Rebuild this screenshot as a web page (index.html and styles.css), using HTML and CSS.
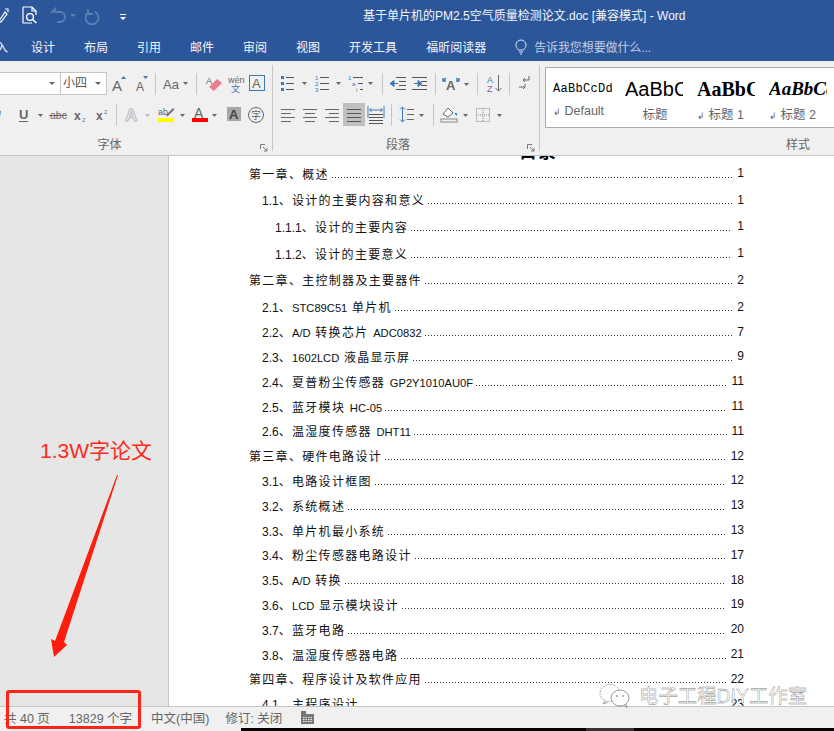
FILE: index.html
```html
<!DOCTYPE html>
<html lang="zh-CN">

<head>
    <meta charset="UTF-8">
    <title>基于单片机的PM2.5空气质量检测论文.doc</title>
    <link rel="stylesheet" href="styles.css">
</head>

<body>
    <div class="window">
        <!-- 标题栏 -->
        <div class="titlebar">
            <svg width="22" height="32"><path d="M-1 21l6-9 2 2-6 8zM5 9h3v3" fill="none" stroke="#fff" stroke-width="1.2"/></svg>
            <svg width="28" height="32"><path d="M1 7h9l4 4v4M1 7v16h9M10 7v4h4" fill="none" stroke="#fff" stroke-width="1.2"/><circle cx="8" cy="17" r="3.4" fill="none" stroke="#fff" stroke-width="1.4"/><path d="M10.5 19.5l4 3.5" stroke="#fff" stroke-width="1.6"/></svg>
            <svg width="35" height="32"><path d="M1 13l4-4v3h5a4.500 4.500 0 0 1 0 10H7" fill="none" stroke="#5d7fb1" stroke-width="1.8"/><path d="M20 14h6l-3 3z" fill="#5d7fb1"/></svg>
            <svg width="35" height="32"><path d="M10 11a6.500 6.500 0 1 1-6 0M3 8v5h5" fill="none" stroke="#5d7fb1" stroke-width="1.8" transform="translate(0 1)"/></svg>
            <svg width="10" height="32"><path d="M0 14h6v1H0zM0 17h6l-3 3z" fill="#fff"/></svg>
            <div class="doc-title">基于单片机的PM2.5空气质量检测论文.doc [兼容模式] - Word</div>
        </div>
        <div class="tabs">
            <span class="tab tab-first">插入</span>
            <span class="tab">设计</span>
            <span class="tab">布局</span>
            <span class="tab">引用</span>
            <span class="tab">邮件</span>
            <span class="tab">审阅</span>
            <span class="tab">视图</span>
            <span class="tab">开发工具</span>
            <span class="tab">福昕阅读器</span>
            <svg class="bulb" width="12" height="16"><path d="M3.500 11C2 9 1 8 1 6a5 5 0 0 1 10 0c0 2-1 3-2.500 5zM4 13h4M5 15h2" fill="none" stroke="#dfe6f1" stroke-width="1"/></svg>
            <span class="tell">告诉我您想要做什么...</span>
        </div>

        <!-- 功能区 -->
        <div class="ribbon">
            <div class="group group-font">
                <div class="tool-row">
                    <div class="select select-name"><i class="caret"></i></div>
                    <div class="select select-size"><span class="size-text">小四</span><i class="caret"></i></div>
                    <svg width="23" height="23"><text x="5" y="19" class="ico" font-size="15">A</text><path d="M14 7l2.500-3 2.500 3z" fill="#3f78b5"/></svg>
                    <svg width="23" height="23"><text x="6" y="19" class="ico" font-size="12">A</text><path d="M13 4h5l-2.500 3z" fill="#3f78b5"/></svg>
                    <i class="sep"></i>
                    <svg width="36" height="23"><text x="5" y="17" class="ico" font-size="13">Aa</text><path d="M25 10h5l-2.500 3z" fill="#666"/></svg>
                    <i class="sep"></i>
                    <svg width="25" height="23"><text x="7" y="12" class="ico" font-size="9">A</text><path d="M10 15l8-8 5 4-8 8z" fill="#e8808c"/></svg>
                    <svg width="23" height="23"><text x="4" y="11" class="ico" font-size="9">wén</text><text x="7" y="20" class="ico-blue" font-size="9">文</text></svg>
                    <svg width="21" height="23"><rect x="2.500" y="3.500" width="15" height="15" fill="none" stroke="#3f78b5"/><text x="5" y="16" class="ico" font-size="13">A</text></svg>
                </div>
                <div class="tool-row">
                    <svg width="14" height="23"><text x="-3" y="17" class="ico" font-size="13" font-weight="bold" font-style="italic">I</text></svg>
                    <svg width="32" height="23"><text x="5" y="16" class="ico" font-size="13" font-weight="bold">U</text><path d="M5 18.500h9" stroke="#666"/><path d="M24 11h5l-2.500 3z" fill="#666"/></svg>
                    <svg width="24" height="23"><text x="4" y="16" class="ico" font-size="10.500">abc</text><path d="M3 12.500h18" stroke="#666"/></svg>
                    <svg width="22" height="23"><text x="4" y="17" class="ico" font-size="12" font-weight="bold">x</text><text x="12" y="19" class="ico-blue" font-size="6">2</text></svg>
                    <svg width="22" height="23"><text x="4" y="17" class="ico" font-size="12" font-weight="bold">x</text><text x="12" y="11" class="ico-blue" font-size="6">2</text></svg>
                    <i class="sep"></i>
                    <svg width="36" height="23"><text x="6" y="18" font-size="17" font-family="Liberation Sans" fill="#f0f0f0" stroke="#bdbdbd" stroke-width="1" font-weight="bold">A</text><path d="M26 11h5l-2.500 3z" fill="#bbb"/></svg>
                    <svg width="35" height="23"><text x="3" y="12" class="ico" font-size="9">ab</text><path d="M11 12l7-7 1.500 1.500-7 7z" fill="#777"/><rect x="3" y="15" width="16" height="4" fill="#ff0"/><path d="M25 11h5l-2.500 3z" fill="#666"/></svg>
                    <svg width="32" height="23"><text x="4" y="15" class="ico" font-size="14">A</text><rect x="2" y="15" width="16" height="4" fill="#f00"/><path d="M22 11h5l-2.500 3z" fill="#666"/></svg>
                    <svg width="23" height="23"><rect x="5" y="4" width="14" height="14" fill="#a6a6a6"/><text x="7" y="16" class="ico-dark" font-size="13" font-weight="bold">A</text></svg>
                    <svg width="22" height="23"><circle cx="11" cy="12" r="7.500" fill="none" stroke="#666"/><text x="6" y="16" class="ico" font-size="10">字</text></svg>
                </div>
                <div class="group-label">字体</div>
                <svg class="launcher" width="8" height="8"><path d="M.5 5V.5H5M3 3l4 4M4 7h3V4" fill="none" stroke="#777"/></svg>
            </div>

            <div class="group group-para">
                <div class="tool-row">
                    <svg width="38" height="23"><g class="list-dots"><rect x="8" y="4" width="3" height="3"/><rect x="8" y="10" width="3" height="3"/><rect x="8" y="16" width="3" height="3"/></g><path d="M13 5.500h8M13 11.500h8M13 17.500h8" stroke="#555"/><path d="M29 10h5l-2.500 3z" fill="#666"/></svg>
                    <svg width="34" height="23"><text x="4" y="8" class="ico-blue" font-size="6">1</text><text x="4" y="14" class="ico-blue" font-size="6">2</text><text x="4" y="20" class="ico-blue" font-size="6">3</text><path d="M9 5.500h9M9 11.500h9M9 17.500h9" stroke="#555"/><path d="M25 10h5l-2.500 3z" fill="#666"/></svg>
                    <svg width="35" height="23"><text x="3" y="8" class="ico-blue" font-size="6">1</text><text x="7" y="14" class="ico-blue" font-size="6">a</text><text x="11" y="20" class="ico-blue" font-size="6">i</text><path d="M8 5.500h10M13 11.500h5M15 17.500h3" stroke="#555"/><path d="M23 10h5l-2.500 3z" fill="#666"/></svg>
                    <i class="sep"></i>
                    <svg width="24" height="23"><path d="M5 11.500l4-3v6zM9 11.500h4" fill="#3f78b5" stroke="#3f78b5"/><path d="M11 5.500h10M14 9.500h7M14 13.500h7M11 17.500h10" stroke="#555"/></svg>
                    <svg width="24" height="23"><path d="M13 11.500l-4-3v6zM9 11.500H5" fill="#3f78b5" stroke="#3f78b5"/><path d="M3 5.500h15M12 9.500h6M12 13.500h6M3 17.500h15" stroke="#555"/></svg>
                    <i class="sep"></i>
                    <svg width="37" height="23"><text x="8" y="18" class="ico" font-size="13" font-weight="bold">A</text><path d="M5 9l3-3M5 6v3h3M21 9l-3-3M21 6v3h-3" fill="none" stroke="#3f78b5" stroke-width="1.300"/><path d="M26 11h5l-2.500 3z" fill="#666"/></svg>
                    <i class="sep"></i>
                    <svg width="27" height="23"><text x="7" y="11" class="ico-blue" font-size="9">A</text><text x="7" y="20" fill="#8a5fb0" font-size="9" font-family="Liberation Sans">Z</text><path d="M18.500 3v16M15.500 16l3 3 3-3" fill="none" stroke="#666"/></svg>
                    <i class="sep"></i>
                    <svg width="23" height="23"><path d="M11 8h6V4M11 8l2-2M11 8l2 2M7 15h6v-3M13 15l-2 2" fill="none" stroke="#666"/></svg>
                </div>
                <div class="tool-row">
                    <svg width="26" height="23"><path d="M8 6.500h14M8 10.500h10M8 14.500h14M8 18.500h10" stroke="#666"/></svg>
                    <svg width="22" height="23"><path d="M4 6.500h14M6 10.500h10M4 14.500h14M6 18.500h10" stroke="#666"/></svg>
                    <svg width="22" height="23"><path d="M4 6.500h14M8 10.500h10M4 14.500h14M8 18.500h10" stroke="#666"/></svg>
                    <svg class="tool-on" width="22" height="23"><path d="M4 6.500h14M4 10.500h14M4 14.500h14M4 18.500h14" stroke="#555"/></svg>
                    <svg width="24" height="23"><path d="M3 3v12M19 3v12M5 7h12" fill="none" stroke="#3f78b5"/><path d="M6.500 5l-2 2 2 2M15.500 5l2 2-2 2" fill="none" stroke="#3f78b5"/><path d="M4 11.500h14M4 14.500h14M4 17.500h14M4 20.500h14" stroke="#555"/></svg>
                    <i class="sep"></i>
                    <svg width="37" height="23"><path d="M8.500 4v15M6 6.500l2.500-2.500 2.500 2.500M6 16.500l2.500 2.500 2.500-2.500" fill="none" stroke="#3f78b5"/><path d="M13 6.500h7M13 11.500h7M13 16.500h7" stroke="#666"/><path d="M25 11h5l-2.500 3z" fill="#666"/></svg>
                    <i class="sep"></i>
                    <svg width="36" height="23"><path d="M7 11l5-6 5 5-5 4z" fill="#fff" stroke="#666"/><rect x="5" y="16" width="16" height="3" fill="none" stroke="#888"/><path d="M18 10h3v3z" fill="#3f78b5"/><path d="M27 11h5l-2.500 3z" fill="#666"/></svg>
                    <svg width="34" height="23"><rect x="4.500" y="5.500" width="13" height="13" fill="none" stroke="#888" stroke-dasharray="1 1"/><path d="M4 12h14M11 5v14" stroke="#888" stroke-dasharray="1 1"/><path d="M25 11h5l-2.500 3z" fill="#666"/></svg>
                </div>
                <div class="group-label">段落</div>
                <svg class="launcher" width="8" height="8"><path d="M.5 5V.5H5M3 3l4 4M4 7h3V4" fill="none" stroke="#777"/></svg>
            </div>

            <div class="group-styles">
                <div class="gallery">
                    <div class="style-item">
                        <div class="preview pv-default">AaBbCcDd</div>
                        <div class="style-name"><small>↲</small> Default</div>
                    </div>
                    <div class="style-item">
                        <div class="preview pv-title">AaBbC</div>
                        <div class="style-name style-center">标题</div>
                    </div>
                    <div class="style-item">
                        <div class="preview pv-h1">AaBbC</div>
                        <div class="style-name"><small>↲</small> 标题 1</div>
                    </div>
                    <div class="style-item">
                        <div class="preview pv-h2">AaBbCc</div>
                        <div class="style-name"><small>↲</small> 标题 2</div>
                    </div>
                </div>
                <div class="group-label styles-label">样式</div>
            </div>
        </div>

        <!-- 文档区 -->
        <div class="doc-area">
            <div class="margin-gray"></div>
            <div class="page">
                <div class="toc-title">目录</div>
                <div class="toc-row big l1"><span>第一章、概述</span><i class="dots"></i><b>1</b></div>
                <div class="toc-row big l2"><span><em>1.1</em>、设计的主要内容和意义</span><i class="dots"></i><b>1</b></div>
                <div class="toc-row big l3"><span><em>1.1.1</em>、设计的主要内容</span><i class="dots"></i><b>1</b></div>
                <div class="toc-row big l3"><span><em>1.1.2</em>、设计的主要意义</span><i class="dots"></i><b>1</b></div>
                <div class="toc-row big l1 gap-after"><span>第二章、主控制器及主要器件</span><i class="dots"></i><b>2</b></div>
                <div class="toc-row l2"><span><em>2.1</em>、<em>STC89C51</em> 单片机</span><i class="dots"></i><b>2</b></div>
                <div class="toc-row l2"><span><em>2.2</em>、<em>A/D</em> 转换芯片 <em>ADC0832</em></span><i class="dots"></i><b>7</b></div>
                <div class="toc-row l2"><span><em>2.3</em>、<em>1602LCD</em> 液晶显示屏</span><i class="dots"></i><b>9</b></div>
                <div class="toc-row l2"><span><em>2.4</em>、夏普粉尘传感器 <em>GP2Y1010AU0F</em></span><i class="dots"></i><b>11</b></div>
                <div class="toc-row l2"><span><em>2.5</em>、蓝牙模块 <em>HC-05</em></span><i class="dots"></i><b>11</b></div>
                <div class="toc-row l2"><span><em>2.6</em>、温湿度传感器 <em>DHT11</em></span><i class="dots"></i><b>11</b></div>
                <div class="toc-row l1"><span>第三章、硬件电路设计</span><i class="dots"></i><b>12</b></div>
                <div class="toc-row l2"><span><em>3.1</em>、电路设计框图</span><i class="dots"></i><b>12</b></div>
                <div class="toc-row l2"><span><em>3.2</em>、系统概述</span><i class="dots"></i><b>13</b></div>
                <div class="toc-row l2"><span><em>3.3</em>、单片机最小系统</span><i class="dots"></i><b>13</b></div>
                <div class="toc-row l2"><span><em>3.4</em>、粉尘传感器电路设计</span><i class="dots"></i><b>17</b></div>
                <div class="toc-row l2"><span><em>3.5</em>、<em>A/D</em> 转换</span><i class="dots"></i><b>18</b></div>
                <div class="toc-row l2"><span><em>3.6</em>、<em>LCD</em> 显示模块设计</span><i class="dots"></i><b>19</b></div>
                <div class="toc-row l2"><span><em>3.7</em>、蓝牙电路</span><i class="dots"></i><b>20</b></div>
                <div class="toc-row l2"><span><em>3.8</em>、温湿度传感器电路</span><i class="dots"></i><b>21</b></div>
                <div class="toc-row l1"><span>第四章、程序设计及软件应用</span><i class="dots"></i><b>22</b></div>
                <div class="toc-row l2"><span><em>4.1</em>、主程序设计</span><i class="dots"></i><b>23</b></div>
            </div>
        </div>

        <!-- 状态栏 -->
        <div class="statusbar">
            <span class="st-pages">共 40 页</span>
            <span class="st-words">13829 个字</span>
            <span class="st-lang">中文(中国)</span>
            <span class="st-track">修订: 关闭</span>
            <svg class="st-icon" width="13" height="13"><rect y="3" width="13" height="10" fill="#777"/><rect width="5" height="4" fill="#777"/><path d="M2 6.500h9M2 8.500h9M2 10.500h9" stroke="#eee" stroke-dasharray="1.500 1"/></svg>
        </div>
        <div class="taskstrip">
            <i class="strip-gap"></i><i class="strip-black strip-a"></i><i class="strip-mid"></i><i class="strip-black strip-b"></i>
        </div>

        <!-- 图上的标注 -->
        <div class="note">1.3W字论文</div>
        <svg class="arrow" width="130" height="200"><path d="M118 0L64 167l3 3-13 12-3-18 4 2L117 0z" fill="#ff1c0c"/></svg>
        <div class="red-box"></div>
        <svg class="wechat" width="32" height="28"><ellipse cx="11" cy="11" rx="10" ry="8.500" fill="#fff" fill-opacity=".7" stroke="#aaa" stroke-dasharray="2 1"/><ellipse cx="21" cy="16" rx="9" ry="8" fill="#fff" fill-opacity=".7" stroke="#999"/><circle cx="18" cy="14" r="1" fill="#999"/><circle cx="24" cy="14" r="1" fill="#999"/><path d="M6 19l-2 3 5-2M25 23l3 3-1-4" fill="none" stroke="#999"/></svg>
        <div class="watermark">电子工程DIY工作室</div>
    </div>
</body>

</html>
```

FILE: styles.css
```css
* {
    padding: 0;
    margin: 0;
    box-sizing: border-box;
}

body {
    font-family: "Liberation Sans", "Noto Sans CJK SC", sans-serif;
    overflow: hidden;
}

svg {
    display: block;
    flex: none;
}

.window {
    width: 834px;
    height: 731px;
    position: relative;
    overflow: hidden;
    display: flex;
    flex-direction: column;
}

/* 标题栏 */
.titlebar {
    height: 32px;
    background-color: #2b579a;
    display: flex;
    color: #fff;
}

.doc-title {
    margin-left: 233px;
    line-height: 33px;
    font-size: 12px;
    white-space: nowrap;
    color: #f2f5fa;
}

.tabs {
    height: 29px;
    background-color: #2b579a;
    display: flex;
    align-items: center;
    gap: 29px;
    color: #f4f6fb;
    font-size: 12px;
    white-space: nowrap;
    overflow: hidden;
}

.tab-first {
    margin-left: -16px;
    margin-right: -6px;
}

.bulb {
    margin-right: -22px;
}

.tell {
    color: #c3cfe2;
    letter-spacing: -.1px;
}

/* 功能区 */
.ribbon {
    height: 95px;
    background-color: #f0f0f0;
    border-bottom: 1px solid #c6c6c6;
    display: flex;
    padding-top: 4px;
    flex: none;
}

.group {
    height: 86px;
    flex: none;
    position: relative;
    padding-top: 7px;
    border-right: 1px solid #c6c6c6;
    display: flex;
    flex-direction: column;
    gap: 8px;
}

.group-font {
    width: 273px;
}

.group-para {
    width: 267px;
}

.tool-row {
    height: 23px;
    display: flex;
    align-items: center;
}

.sep {
    flex: none;
    width: 1px;
    height: 22px;
    margin: 0 2px;
    background-color: #c6c6c6;
}

.ico {
    fill: #666;
    font-family: "Liberation Sans", "Noto Sans CJK SC", sans-serif;
}

.ico-dark {
    fill: #444;
    font-family: "Liberation Sans", sans-serif;
}

.ico-blue {
    fill: #3f78b5;
    font-family: "Liberation Sans", "Noto Sans CJK SC", sans-serif;
}

.list-dots {
    fill: #3f78b5;
}

.tool-on {
    background-color: #c0c0c0;
}

.select {
    height: 23px;
    background-color: #fff;
    border: 1px solid #c6c6c6;
    position: relative;
    flex: none;
}

.select-name {
    width: 60px;
    border-left: 0;
    border-right: 0;
}

.select-size {
    width: 47px;
    font-size: 12px;
    line-height: 21px;
    color: #444;
    padding-left: 2px;
}

.size-text {
    color: #555;
}

.caret {
    position: absolute;
    right: 5px;
    top: 9px;
    width: 0;
    height: 0;
    border-left: 3px solid transparent;
    border-right: 3px solid transparent;
    border-top: 3px solid #666;
}

.group-label {
    position: absolute;
    left: 0;
    right: 0;
    top: 71px;
    text-align: center;
    font-size: 12px;
    line-height: 18px;
    color: #666;
}

.group-font .group-label {
    right: 53px;
}

.group-para .group-label {
    right: 16px;
}

.launcher {
    position: absolute;
    right: 4px;
    top: 79px;
}

.group-styles {
    flex: 1;
    min-width: 0;
    overflow: hidden;
    position: relative;
    padding: 2px 0 0 5px;
}

.gallery {
    width: 320px;
    height: 61px;
    background-color: #fff;
    border: 1px solid #ababab;
    padding-left: 1px;
    display: flex;
}

.style-item {
    width: 72px;
    flex: none;
    padding: 9px 6px 0;
}

.preview {
    width: 60px;
    height: 24px;
    line-height: 24px;
    overflow: hidden;
    white-space: nowrap;
    color: #000;
}

.pv-default {
    font-family: "Liberation Mono", monospace;
    font-size: 12px;
    letter-spacing: .3px;
}

.pv-title {
    font-size: 20px;
    width: 58px;
}

.pv-h1 {
    font-family: "Liberation Serif", serif;
    font-weight: bold;
    font-size: 20px;
    width: 58px;
}

.pv-h2 {
    font-family: "Liberation Serif", serif;
    font-weight: bold;
    font-style: italic;
    font-size: 19px;
    width: 58px;
}

.style-name {
    margin-top: 3px;
    font-size: 12.5px;
    color: #666;
    white-space: nowrap;
}

.style-name small {
    font-size: 9px;
}

.style-center {
    text-align: center;
}

.styles-label {
    left: 246px;
    right: 24px;
}

/* 文档区 */
.doc-area {
    height: 550px;
    display: flex;
    flex: none;
    overflow: hidden;
}

.margin-gray {
    width: 169px;
    background-color: #e6e6e6;
    border-right: 1px solid #c6c6c6;
}

.page {
    flex: 1;
    background-color: #fff;
    padding: 0 90px 0 80px;
    color: #111;
    overflow: hidden;
}

.toc-title {
    height: 20px;
    line-height: 20px;
    margin-top: -16px;
    padding-left: 270px;
    font-size: 18px;
    font-weight: bold;
    letter-spacing: 1px;
    color: #000;
    position: relative;
    top: 2px;
}

.toc-row {
    height: 24.8px;
    display: flex;
    align-items: center;
    font-size: 12px;
    letter-spacing: 1.3px;
    white-space: nowrap;
}

.big {
    height: 26.6px;
}

.gap-after {
    margin-bottom: 1.5px;
}

.toc-row em {
    font-style: normal;
    font-size: 11.2px;
    letter-spacing: 0;
}

.toc-row em:first-child {
    font-size: 12px;
}

.toc-row b {
    font-weight: normal;
    letter-spacing: 0;
    font-family: "Liberation Sans", sans-serif;
}

.l2 {
    padding-left: 13px;
}

.l3 {
    padding-left: 26px;
}

.dots {
    flex: 1;
    height: 1px;
    margin: 8px 5px 0 3px;
    background-image: linear-gradient(to right, #333 1px, transparent 1px);
    background-size: 3px 1px;
}

/* 状态栏 */
.statusbar {
    height: 22px;
    flex: none;
    background-color: #f0f0f0;
    border-top: 1px solid #c6c6c6;
    position: relative;
    z-index: 1;
    display: flex;
    align-items: center;
    font-size: 12.5px;
    color: #666;
    white-space: nowrap;
}

.st-pages {
    margin-left: 4px;
}

.st-words {
    margin-left: 19px;
}

.st-lang {
    margin-left: 19px;
}

.st-track {
    margin-left: 16px;
}

.st-icon {
    margin-left: 19px;
}

.taskstrip {
    height: 3px;
    display: flex;
    background-color: #f0f0f0;
}

.strip-gap {
    width: 241px;
}

.strip-black {
    background-color: #000;
}

.strip-a {
    width: 345px;
}

.strip-mid {
    width: 48px;
    background-color: #333;
}

.strip-b {
    flex: 1;
}

/* 标注 */
.note {
    position: absolute;
    left: 40px;
    top: 437px;
    font-size: 21px;
    line-height: 28px;
    color: #ff2a1a;
    white-space: nowrap;
}

.arrow {
    position: absolute;
    left: 0;
    top: 475px;
}

.red-box {
    position: absolute;
    z-index: 2;
    left: 6px;
    top: 690px;
    width: 135px;
    height: 39px;
    border: 3px solid #ff2418;
    border-radius: 3px;
}

.wechat {
    position: absolute;
    z-index: 2;
    left: 599px;
    top: 682px;
}

.watermark {
    position: absolute;
    z-index: 2;
    left: 639px;
    top: 682px;
    font-size: 19.4px;
    line-height: 28px;
    color: #fff;
    -webkit-text-stroke: .35px #777;
    white-space: nowrap;
}
```
